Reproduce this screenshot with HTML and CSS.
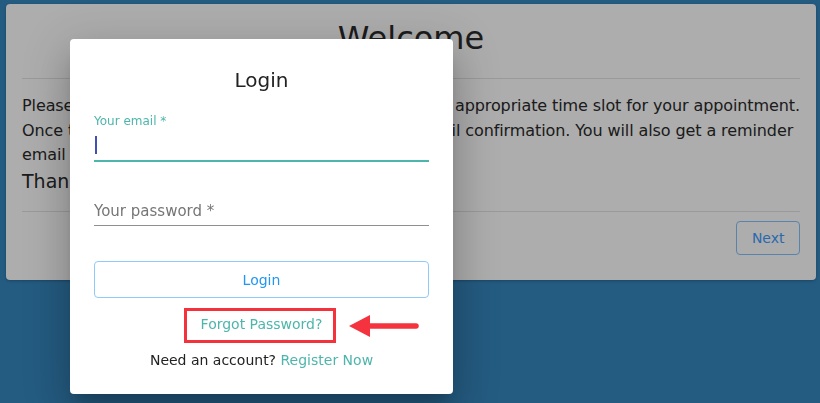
FILE: index.html
```html
<!DOCTYPE html>
<html lang="en">
<head>
<meta charset="utf-8">
<title>Welcome</title>
<link rel="stylesheet" href="styles.css">
</head>
<body>
<div class="page">
  <div class="card">
    <div class="card-header"><h1 class="card-title">Welcome</h1></div>
    <div class="card-body">
      <p class="intro">Please select the date first, and then choose the most appropriate time slot for your appointment.<br>Once the time slot is booked, you will receive an e-mail confirmation. You will also get a reminder<br>email 24 hours before your appointment.</p>
      <p class="thanks">Thank you!</p>
    </div>
    <div class="card-footer"><button class="btn-next" type="button">Next</button></div>
  </div>
</div>

<div class="backdrop"></div>

<div class="dialog">
  <h2 class="dialog-title">Login</h2>
  <div class="field">
    <label class="field-label">Your email *</label>
    <div class="field-input focused"><span class="caret"></span></div>
  </div>
  <div class="field pw-field">
    <input class="pw-input" type="password" placeholder="Your password *">
  </div>
  <button class="btn-login" type="button">Login</button>
  <div class="forgot-row">
    <div class="forgot-wrap">
      <a class="forgot" href="#">Forgot Password?</a>
      <svg class="arrow" width="70" height="22" viewBox="0 0 70 22">
        <polygon points="0,11 21,0 21,22" fill="#f5333f"/>
        <line x1="18" y1="11" x2="67" y2="11" stroke="#f5333f" stroke-width="5.5" stroke-linecap="round"/>
      </svg>
    </div>
  </div>
  <p class="signup">Need an account? <a href="#">Register Now</a></p>
</div>
</body>
</html>
```

FILE: styles.css
```css
* {
  box-sizing: border-box;
}

html, body {
  margin: 0;
  height: 100%;
}

body {
  font-family: "DejaVu Sans", "Liberation Sans", sans-serif;
  background: #3687bf;
  color: #222;
}

.page {
  padding: 4px 0 0 6px;
}

.card {
  width: 810px;
  background: #fff;
  border-radius: 4px;
  padding: 16px;
  box-shadow: 0 1px 3px rgba(0, 0, 0, 0.25);
  color: #2a2a2a;
}

.card-header {
  padding-bottom: 22px;
  border-bottom: 1px solid #e3e3e3;
}

.card-title {
  margin: 0;
  font-size: 32px;
  line-height: 36px;
  font-weight: 400;
  text-align: center;
}

.card-body {
  padding: 15.25px 0 17px;
}

.intro {
  margin: 0;
  font-size: 16px;
  line-height: 24.5px;
  letter-spacing: -0.1px;
  white-space: nowrap;
}

.thanks {
  margin: 0;
  font-size: 19px;
  line-height: 26px;
}

.card-footer {
  border-top: 1px solid #e3e3e3;
  padding: 9px 0;
  display: flex;
  justify-content: flex-end;
}

.btn-next {
  font-family: inherit;
  font-size: 14px;
  line-height: 32px;
  padding: 0 14.5px;
  border: 1px solid #84c1fb;
  border-radius: 4px;
  background: transparent;
  color: #3d9bff;
}

.backdrop {
  position: fixed;
  inset: 0;
  background: rgba(0, 0, 0, 0.32);
}

.dialog {
  position: absolute;
  left: 70px;
  top: 39px;
  width: 383px;
  background: #fff;
  border-radius: 4px;
  padding: 24px;
  box-shadow: 0 11px 15px -7px rgba(0, 0, 0, 0.2),
              0 24px 38px 3px rgba(0, 0, 0, 0.14),
              0 9px 46px 8px rgba(0, 0, 0, 0.12);
}

.dialog-title {
  margin: 1px 0 0;
  font-size: 20px;
  line-height: 32px;
  font-weight: 400;
  text-align: center;
  color: #222;
}

.field-label {
  display: block;
  margin-top: 17px;
  font-size: 12px;
  line-height: 16px;
  color: #4db6ac;
}

.field-input {
  height: 33px;
  padding-top: 7px;
  border-bottom: 2px solid #4db6ac;
}

.caret {
  display: block;
  width: 1.5px;
  height: 18px;
  margin-left: 1px;
  background: #3f51b5;
}

.pw-field {
  margin-top: 38.5px;
}

.pw-input {
  display: block;
  width: 100%;
  height: 25px;
  padding: 0 0 4px;
  border: 0;
  border-bottom: 1px solid #8f8f8f;
  font-family: inherit;
  font-size: 15px;
  color: #222;
  background: transparent;
  outline: none;
}

.pw-input::placeholder {
  color: #767676;
}

.btn-login {
  display: block;
  width: 100%;
  height: 37px;
  margin-top: 35.5px;
  border: 1px solid #90caf9;
  border-radius: 4px;
  background: #fff;
  color: #2196f3;
  font-family: inherit;
  font-size: 14px;
}

.forgot-row {
  margin-top: 10px;
  display: flex;
  justify-content: center;
}

.forgot-wrap {
  position: relative;
  margin-left: -3px;
}

.forgot {
  display: block;
  border: 3px solid #f3323c;
  padding: 0 11px 2px 14px;
  font-size: 14px;
  line-height: 27px;
  color: #4db6ac;
  text-decoration: none;
}

.arrow {
  position: absolute;
  left: calc(100% + 13px);
  top: 50%;
  margin-top: -11px;
}

.signup {
  margin: 7px 0 0;
  font-size: 14px;
  line-height: 20px;
  text-align: center;
  color: #222;
}

.signup a {
  color: #4db6ac;
  text-decoration: none;
}
```
